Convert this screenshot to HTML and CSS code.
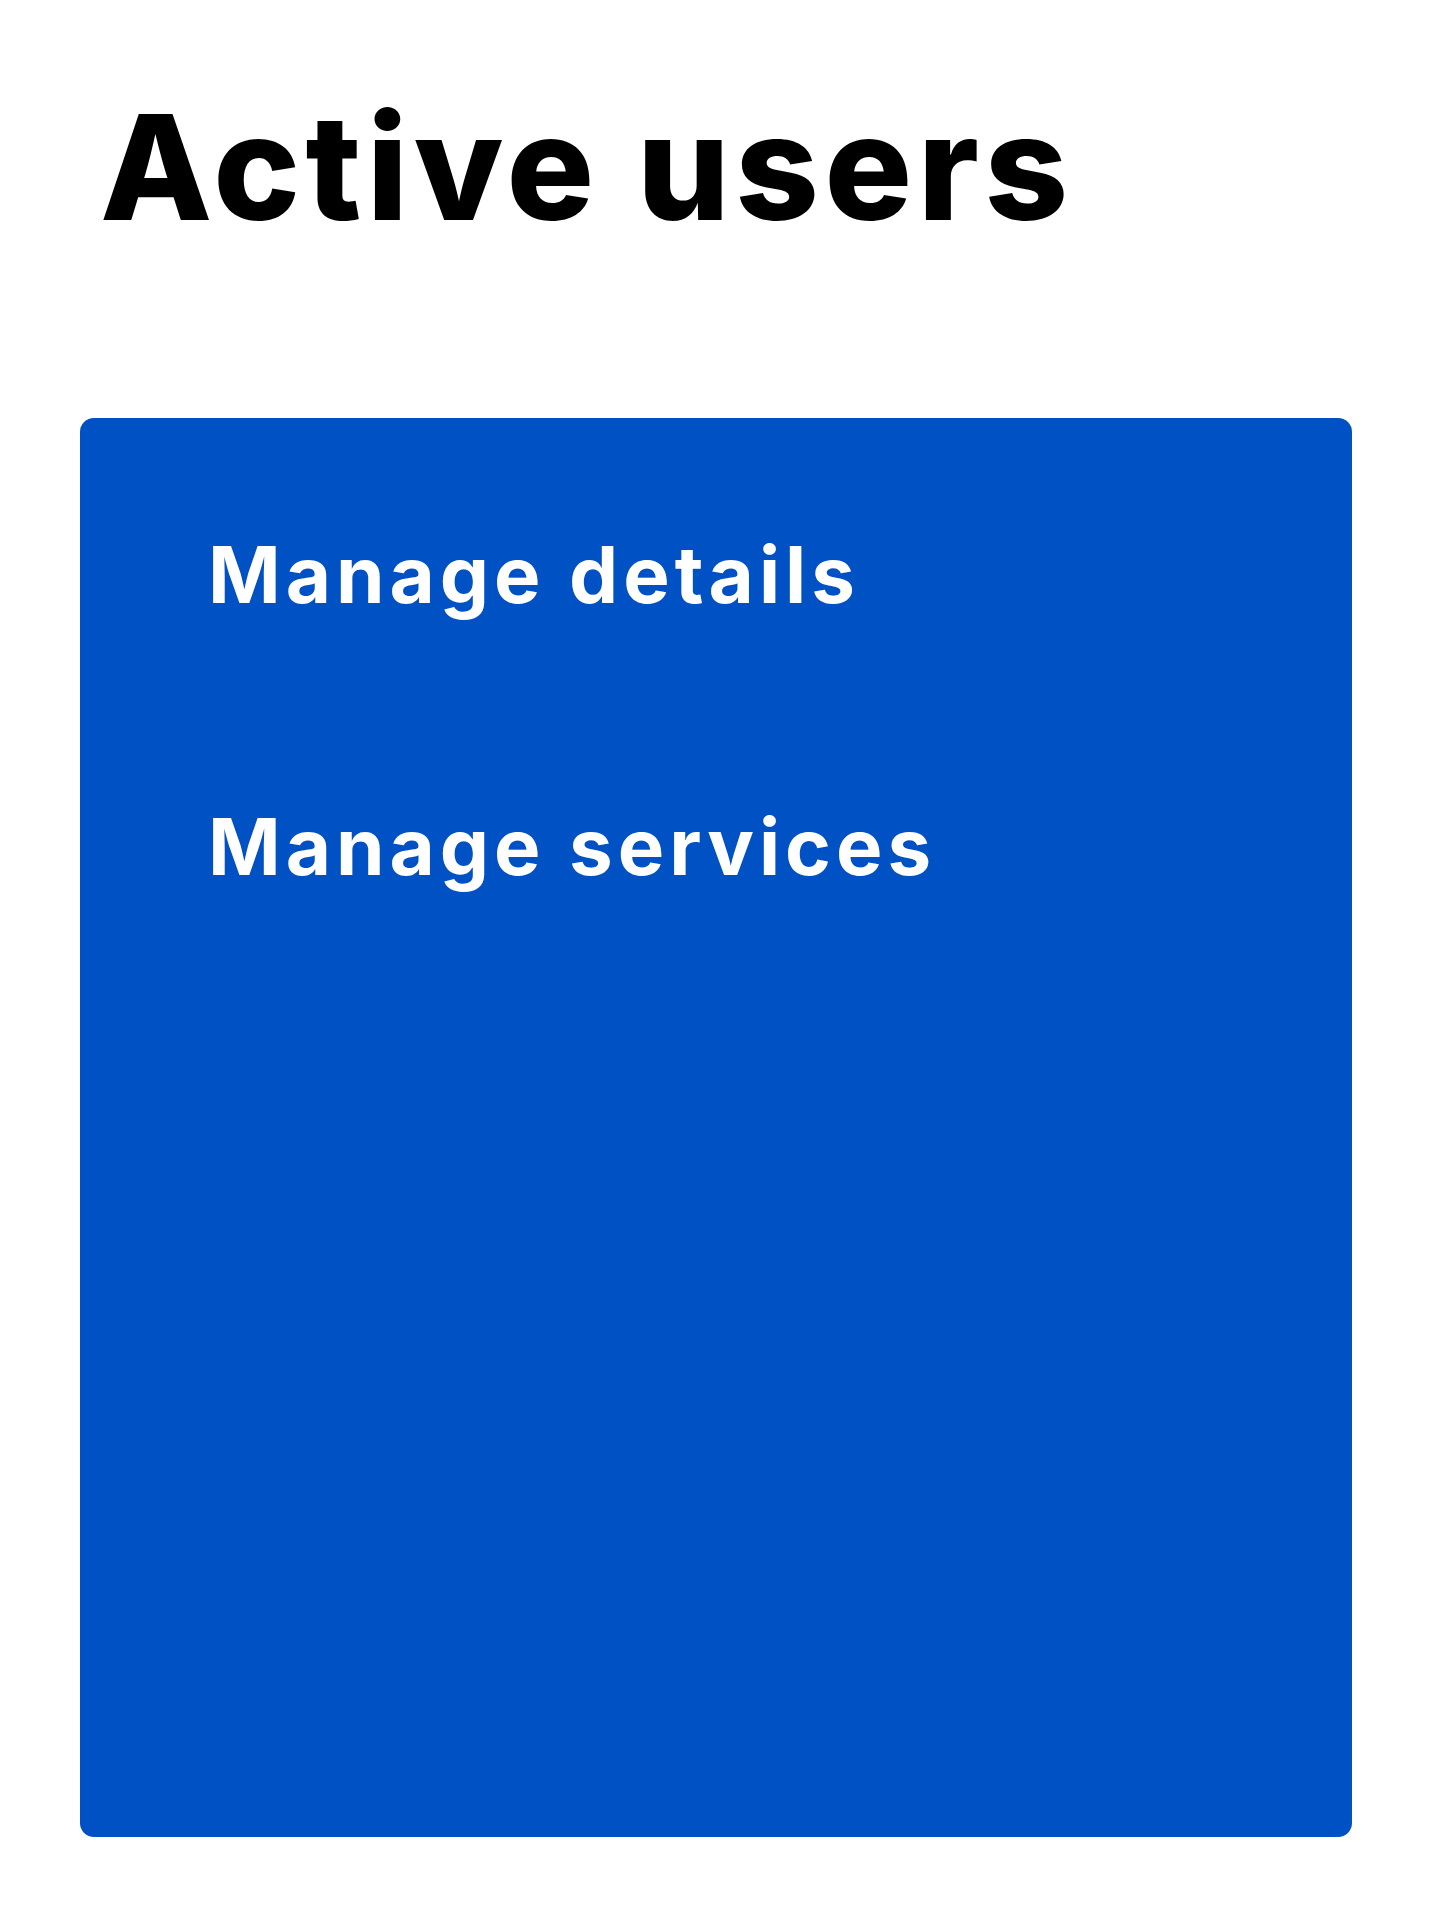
FILE: index.html
```html
<!DOCTYPE html>
<html lang="en">
<head>
<meta charset="utf-8">
<title>Active users</title>
<link rel="stylesheet" href="styles.css">
</head>
<body>
<main class="page">
  <h1 class="title">Active users</h1>
  <nav class="card">
    <a class="card-link" href="#">Manage details</a>
    <a class="card-link" href="#">Manage services</a>
  </nav>
</main>
</body>
</html>
```

FILE: styles.css
```css
html, body {
  margin: 0;
  padding: 0;
  background: #ffffff;
}

.page {
  display: flex;
  flex-direction: column;
  padding: 94px 88px 84px 80px;
  font-family: "Inter", "Open Sans", "DejaVu Sans", sans-serif;
}

.title {
  margin: 0 0 178px 20px;
  font-size: 146px;
  line-height: 1;
  font-weight: 800;
  letter-spacing: 5.5px;
  color: #000000;
}

.card {
  display: flex;
  flex-direction: column;
  align-items: flex-start;
  gap: 194px;
  min-height: 1419px;
  box-sizing: border-box;
  padding: 118px 128px;
  background: #0051c3;
  border-radius: 14px;
}

.card-link {
  font-size: 78px;
  line-height: 1;
  font-weight: 700;
  letter-spacing: 5px;
  color: #ffffff;
  text-decoration: none;
}
```
